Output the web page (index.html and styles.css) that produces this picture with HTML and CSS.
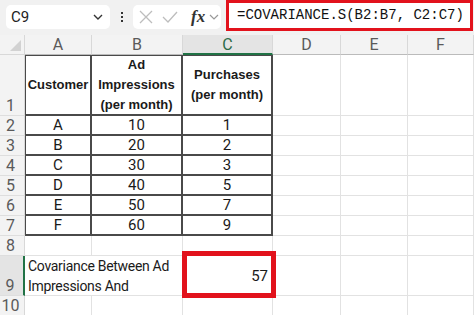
FILE: index.html
```html
<!DOCTYPE html>
<html>
<head>
<meta charset="utf-8">
<title>Covariance</title>
<link rel="stylesheet" href="styles.css">
</head>
<body>
<div class="bar">
  <div class="namebox">
    <span class="ref">C9</span>
    <svg class="chev" width="10" height="6" viewBox="0 0 10 6"><path d="M1 1 L5 5 L9 1" fill="none" stroke="#333" stroke-width="1.4"/></svg>
  </div>
  <div class="dots"><i></i><i></i><i></i></div>
  <div class="fnbox">
    <svg width="14" height="14" viewBox="0 0 14 14"><path d="M1 1 L13 13 M13 1 L1 13" stroke="#bdbdbd" stroke-width="1.3"/></svg>
    <svg width="16" height="12" viewBox="0 0 16 12"><path d="M1 6 L6 11 L15 1" fill="none" stroke="#bdbdbd" stroke-width="1.3"/></svg>
    <span class="fx">fx</span>
    <svg width="10" height="6" viewBox="0 0 10 6"><path d="M1 1 L5 5 L9 1" fill="none" stroke="#999" stroke-width="1.2"/></svg>
  </div>
  <div class="formula">=COVARIANCE.S(B2:B7, C2:C7)</div>
</div>

<div class="sheet">
  <div class="corner"></div>
  <div class="colhead">A</div>
  <div class="colhead">B</div>
  <div class="colhead sel">C</div>
  <div class="colhead">D</div>
  <div class="colhead">E</div>
  <div class="colhead">F</div>

  <div class="rowhead">1</div>
  <div class="cell t tl tt bold">Customer</div>
  <div class="cell t tt bold">Ad<br>Impressions<br>(per month)</div>
  <div class="cell t tt bold">Purchases<br>(per month)</div>
  <div class="cell"></div><div class="cell"></div><div class="cell"></div>

  <div class="rowhead">2</div>
  <div class="cell t tl">A</div><div class="cell t">10</div><div class="cell t">1</div>
  <div class="cell"></div><div class="cell"></div><div class="cell"></div>

  <div class="rowhead">3</div>
  <div class="cell t tl">B</div><div class="cell t">20</div><div class="cell t">2</div>
  <div class="cell"></div><div class="cell"></div><div class="cell"></div>

  <div class="rowhead">4</div>
  <div class="cell t tl">C</div><div class="cell t">30</div><div class="cell t">3</div>
  <div class="cell"></div><div class="cell"></div><div class="cell"></div>

  <div class="rowhead">5</div>
  <div class="cell t tl">D</div><div class="cell t">40</div><div class="cell t">5</div>
  <div class="cell"></div><div class="cell"></div><div class="cell"></div>

  <div class="rowhead">6</div>
  <div class="cell t tl">E</div><div class="cell t">50</div><div class="cell t">7</div>
  <div class="cell"></div><div class="cell"></div><div class="cell"></div>

  <div class="rowhead">7</div>
  <div class="cell t tl">F</div><div class="cell t">60</div><div class="cell t">9</div>
  <div class="cell"></div><div class="cell"></div><div class="cell"></div>

  <div class="rowhead">8</div>
  <div class="cell"></div><div class="cell"></div><div class="cell"></div>
  <div class="cell"></div><div class="cell"></div><div class="cell"></div>

  <div class="rowhead selrow">9</div>
  <div class="cell label">Covariance Between Ad<br>Impressions And</div>
  <div class="cell num active">57</div>
  <div class="cell"></div><div class="cell"></div><div class="cell"></div>

  <div class="rowhead">10</div>
  <div class="cell"></div><div class="cell"></div><div class="cell"></div>
  <div class="cell"></div><div class="cell"></div><div class="cell"></div>
</div>
</body>
</html>
```
FILE: styles.css
```css
html, body { margin: 0; padding: 0; }
body { width: 474px; height: 315px; overflow: hidden; background: #fff; font-family: Roboto, "Liberation Sans", sans-serif; color: #1a1a1a; }

.bar { height: 35px; background: #f1f1f1; display: flex; align-items: flex-start; }
.namebox { margin: 5px 0 0 6px; width: 104px; height: 24px; background: #fff; border-radius: 5px; display: flex; align-items: center; justify-content: space-between; padding: 0 7px 0 5px; box-sizing: border-box; }
.ref { font-size: 15px; color: #222; }
.dots { width: 23px; height: 34px; display: flex; flex-direction: column; align-items: center; justify-content: center; gap: 2px; }
.dots i { width: 2px; height: 2px; background: #333; display: block; }
.fnbox { margin-top: 5px; width: 88px; height: 24px; background: #fff; border-radius: 5px; display: flex; align-items: center; gap: 9px; padding-left: 6px; box-sizing: border-box; }
.fx { font-family: "Liberation Serif", serif; font-style: italic; font-weight: bold; font-size: 17px; color: #333; margin-left: 4px; margin-right: -5px; }
.formula { margin-left: 5px; width: 247px; height: 31px; border: 3px solid #e2121c; box-sizing: border-box; background: #fff; font-family: "Liberation Mono", monospace; font-size: 14px; line-height: 25px; padding-left: 8px; color: #111; }

.sheet { display: grid; grid-template-columns: 25px 67px 91px 90px 68px 67px 1fr; grid-template-rows: 20px 61px repeat(7, 20px) 40px 1fr; height: 280px; font-size: 16px; }
.corner { background: #f3f3f3; border-right: 1px solid #d8d8d8; border-bottom: 1px solid #d8d8d8; position: relative; }
.corner::after { content: ""; position: absolute; right: 3px; bottom: 3px; border-style: solid; border-width: 0 0 11px 11px; border-color: transparent transparent #d2d2d2 transparent; }
.colhead { background: #f3f3f3; color: #5a5a5a; text-align: center; line-height: 19px; border-right: 1px solid #d8d8d8; border-bottom: 1px solid #bbb; }
.colhead.sel { background: #e4e4e4; color: #2b6b47; border-bottom: 2px solid #217346; }
.rowhead { background: #f3f3f3; color: #5a5a5a; border-right: 1px solid #d8d8d8; border-bottom: 1px solid #dedede; display: flex; align-items: flex-end; justify-content: center; padding-right: 3px; line-height: 19px; }
.rowhead.selrow { border-right: 2px solid #217346; background: #e4e4e4; }

.cell { border-right: 1px solid #e2e2e2; border-bottom: 1px solid #e2e2e2; display: flex; align-items: center; justify-content: center; text-align: center; line-height: 20px; font-size: 15px; }
.cell.t { border-right: 2px solid #4a4a4a; border-bottom: 2px solid #4a4a4a; }
.cell.tl { border-left: 1px solid #4a4a4a; }
.cell.tt { border-top: 1px solid #4a4a4a; }
.bold { font-family: "Liberation Sans", sans-serif; font-weight: bold; font-size: 13px; }
.label { grid-column: span 2; justify-content: flex-start; text-align: left; padding-left: 3px; font-size: 14px; letter-spacing: -0.3px; }
.num { justify-content: flex-end; padding-right: 4px; }
.active { position: relative; }
.active::after { content: ""; position: absolute; left: -1px; right: -4px; top: -5px; bottom: -3px; border: 5px solid #e2121c; }
```
